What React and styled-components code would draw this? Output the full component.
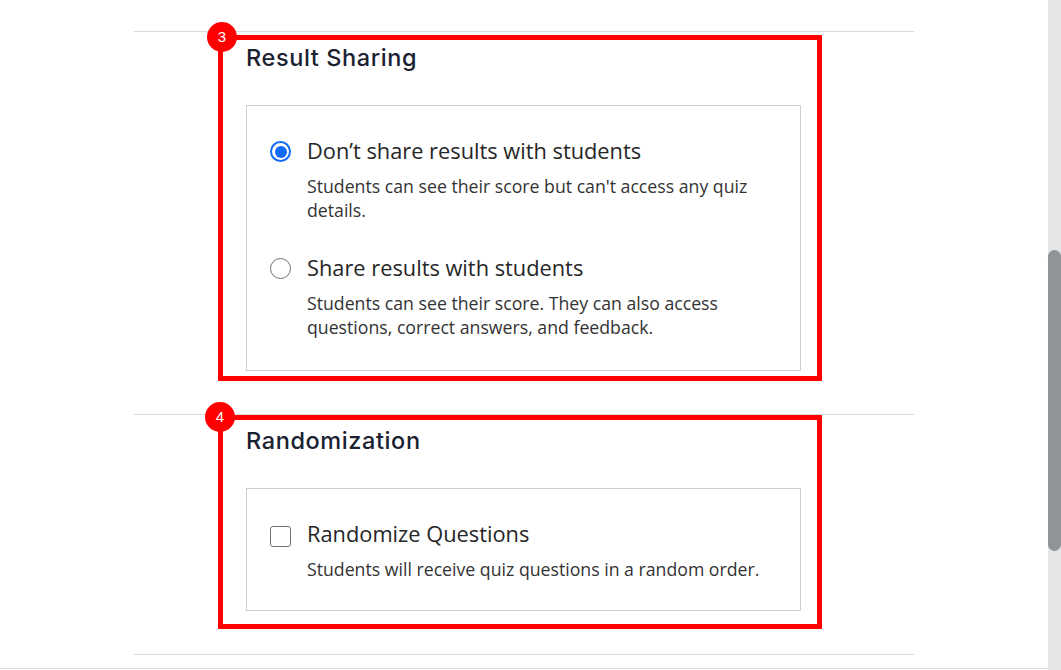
import React from 'react';
import styled, { createGlobalStyle } from 'styled-components';

const GlobalStyle = createGlobalStyle`
  html, body {
    margin: 0;
    padding: 0;
    background: #ffffff;
    overflow: hidden;
  }
  * {
    box-sizing: border-box;
  }
`;

const Page = styled.div`
  display: flex;
  height: 670px;
  width: 100%;
`;

const Main = styled.main`
  flex: 1;
  height: 669px;
  padding-top: 31px;
  border-bottom: 1px solid #dcdcdc;
  overflow: hidden;
`;

const Section = styled.section`
  position: relative;
  width: 780px;
  margin: 0 auto;
  border-top: 1px solid #d9d9d9;
  padding: 12px 0 43px 112px;
`;

const Title = styled.h2`
  margin: 0;
  font-family: Inter, 'Open Sans', sans-serif;
  font-weight: 500;
  font-size: 23.5px;
  line-height: 28px;
  letter-spacing: 0.6px;
  color: #1a2232;
`;

const OptionsBox = styled.div`
  margin-top: 33px;
  width: 555px;
  border: 1px solid #cfcfcf;
  padding: 31px 24px ${(p) => p.$bottom || 31}px;
  display: flex;
  flex-direction: column;
  gap: 32px;
`;

const Option = styled.label`
  display: grid;
  grid-template-columns: 20px 1fr;
  column-gap: 16px;
  align-items: center;
  font-family: 'Open Sans', 'Noto Sans', sans-serif;
`;

const Label = styled.span`
  font-size: 21.8px;
  line-height: 28px;
  color: #262626;
`;

const Description = styled.p`
  grid-column: 2;
  margin: 9px 0 0;
  max-width: 470px;
  font-size: 17.7px;
  line-height: 24px;
  color: #333333;
`;

const Radio = styled.span`
  width: 21px;
  height: 21px;
  border-radius: 50%;
  border: ${(p) => (p.$checked ? '2px solid #0f6af5' : '1.5px solid #707070')};
  display: flex;
  align-items: center;
  justify-content: center;
  margin: 1px 0 0 -1px;

  &::after {
    content: '';
    display: ${(p) => (p.$checked ? 'block' : 'none')};
    width: 12px;
    height: 12px;
    border-radius: 50%;
    background: #0f6af5;
  }
`;

const Checkbox = styled.span`
  width: 21px;
  height: 21px;
  border-radius: 3px;
  border: 1.5px solid #707070;
  margin: 4px 0 0 -1px;
`;

// annotation overlay drawn over the section
const Highlight = styled.div`
  position: absolute;
  left: 84px;
  top: ${(p) => p.$top}px;
  width: 604px;
  height: ${(p) => p.$height}px;
  border: 5px solid #ff0000;
  pointer-events: none;
`;

const Badge = styled.span`
  position: absolute;
  left: ${(p) => p.$left}px;
  top: ${(p) => p.$top}px;
  width: 30px;
  height: 30px;
  border-radius: 50%;
  background: #ff0000;
  color: #ffffff;
  font-family: 'Liberation Sans', Arial, sans-serif;
  font-size: 15px;
  line-height: 30px;
  text-align: center;
`;

const ScrollTrack = styled.div`
  width: 13px;
  height: 670px;
  background: #e5e5e5;
  display: flex;
  flex-direction: column;
`;

const ScrollThumb = styled.div`
  margin-top: 250px;
  height: 301px;
  border-radius: 7px;
  background: #8f9499;
`;

export default function App() {
  return (
    <>
      <GlobalStyle />
      <Page>
        <Main>
          <Section>
            <Title>Result Sharing</Title>
            <OptionsBox>
              <Option>
                <Radio $checked />
                <Label>Don’t share results with students</Label>
                <Description>
                  Students can see their score but can't access any quiz details.
                </Description>
              </Option>
              <Option>
                <Radio />
                <Label>Share results with students</Label>
                <Description>
                  Students can see their score. They can also access questions, correct
                  answers, and feedback.
                </Description>
              </Option>
            </OptionsBox>
            <Highlight $top={3} $height={346} />
            <Badge $left={73} $top={-10}>3</Badge>
          </Section>
          <Section>
            <Title>Randomization</Title>
            <OptionsBox $bottom={29}>
              <Option>
                <Checkbox />
                <Label>Randomize Questions</Label>
                <Description>Students will receive quiz questions in a random order.</Description>
              </Option>
            </OptionsBox>
            <Highlight $top={0} $height={214} />
            <Badge $left={71} $top={-13}>4</Badge>
          </Section>
          <Section />
        </Main>
        <ScrollTrack>
          <ScrollThumb />
        </ScrollTrack>
      </Page>
    </>
  );
}
